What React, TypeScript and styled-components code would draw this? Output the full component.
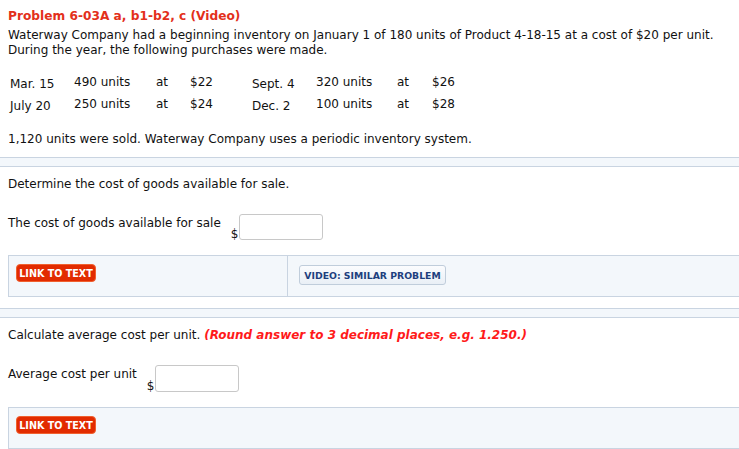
import React from "react";
import styled, { createGlobalStyle } from "styled-components";

const GlobalStyle = createGlobalStyle`
  body {
    margin: 0;
    background: #ffffff;
    font-family: "DejaVu Sans", Verdana, sans-serif;
    font-size: 12px;
    color: #111;
  }
`;

const purchases = [
  { date: "Mar. 15", units: "490 units", price: "$22", date2: "Sept. 4", units2: "320 units", price2: "$26" },
  { date: "July 20", units: "250 units", price: "$24", date2: "Dec. 2", units2: "100 units", price2: "$28" },
];

const App: React.FC = () => {
  return (
    <Page>
      <GlobalStyle />
      <Intro>
        <Title>Problem 6-03A a, b1-b2, c (Video)</Title>
        <Para>
          Waterway Company had a beginning inventory on January 1 of 180 units of Product 4-18-15 at a cost of $20 per unit.
          <br />
          During the year, the following purchases were made.
        </Para>
        <PurchaseGrid>
          {purchases.map((p) => (
            <React.Fragment key={p.date}>
              <DateCell>{p.date}</DateCell>
              <Cell>{p.units}</Cell>
              <Cell>at</Cell>
              <Cell>{p.price}</Cell>
              <DateCell>{p.date2}</DateCell>
              <Cell>{p.units2}</Cell>
              <Cell>at</Cell>
              <Cell>{p.price2}</Cell>
            </React.Fragment>
          ))}
        </PurchaseGrid>
        <SoldNote>1,120 units were sold. Waterway Company uses a periodic inventory system.</SoldNote>
      </Intro>

      <Divider />

      <Question>
        <Prompt>Determine the cost of goods available for sale.</Prompt>
        <AnswerRow>
          <AnswerLabel>The cost of goods available for sale</AnswerLabel>
          <Dollar>$</Dollar>
          <AnswerInput type="text" />
        </AnswerRow>
        <LinkBar>
          <LinkCell $width="279px" $divider>
            <TextLink>LINK TO TEXT</TextLink>
          </LinkCell>
          <LinkCell $pad="11px">
            <VideoButton>VIDEO: SIMILAR PROBLEM</VideoButton>
          </LinkCell>
        </LinkBar>
      </Question>

      <Divider $gap="11px" />

      <Question>
        <Prompt>
          Calculate average cost per unit. <Hint>(Round answer to 3 decimal places, e.g. 1.250.)</Hint>
        </Prompt>
        <AnswerRow>
          <AnswerLabel>Average cost per unit</AnswerLabel>
          <Dollar>$</Dollar>
          <AnswerInput type="text" $h="27px" />
        </AnswerRow>
        <LinkBar>
          <LinkCell>
            <TextLink>LINK TO TEXT</TextLink>
          </LinkCell>
        </LinkBar>
      </Question>
    </Page>
  );
};

export default App;

const Page = styled.div`
  width: 739px;
  overflow: hidden;
`;

const Intro = styled.section`
  padding: 8px 0 0 8px;
`;

const Title = styled.h1`
  margin: 0;
  font-size: 12.2px;
  line-height: 16px;
  font-weight: 700;
  color: #e3301b;
`;

const Para = styled.p`
  margin: 4px 0 0;
  line-height: 15px;
`;

const PurchaseGrid = styled.div`
  display: grid;
  grid-template-columns: 64px 82px 34px 62px 64px 81px 35px 60px;
  grid-auto-rows: 22px;
  margin: 14px 0 0 2px;
`;

const Cell = styled.div`
  line-height: 20px;
  white-space: nowrap;
`;

const DateCell = styled(Cell)`
  padding-top: 2px;
`;

const SoldNote = styled.p`
  margin: 16px 0 0;
  line-height: 15px;
`;

const Divider = styled.div<{ $gap?: string }>`
  margin-top: ${(p) => p.$gap || "10px"};
  height: 8px;
  background: #f3f7fb;
  border-top: 1px solid #c9d4e1;
  border-bottom: 1px solid #c9d4e1;
`;

const Question = styled.section`
  padding-left: 8px;
`;

const Prompt = styled.p`
  margin: 10px 0 0;
  line-height: 15px;
`;

const Hint = styled.span`
  color: #ff1a1a;
  font-weight: 700;
  font-style: italic;
`;

const AnswerRow = styled.div`
  display: flex;
  align-items: flex-start;
  margin-top: 22px;
`;

const AnswerLabel = styled.span`
  margin-top: 2px;
  line-height: 15px;
  margin-right: 10px;
`;

const Dollar = styled.span`
  align-self: flex-end;
  line-height: 12px;
  margin-right: 1px;
`;

const AnswerInput = styled.input<{ $h?: string }>`
  box-sizing: border-box;
  width: 84px;
  height: ${(p) => p.$h || "26px"};
  margin: 0;
  border: 1px solid #c8c8c8;
  border-radius: 3px;
  background: #fff;
`;

const LinkBar = styled.div`
  display: flex;
  margin-top: 15px;
  background: #f3f7fb;
  border: 1px solid #c9d4e1;
  border-right: none;
  height: 40px;
`;

const LinkCell = styled.div<{ $width?: string; $divider?: boolean; $pad?: string }>`
  box-sizing: border-box;
  width: ${(p) => p.$width || "auto"};
  flex: ${(p) => (p.$width ? "none" : "1")};
  padding: 8px 0 0 ${(p) => p.$pad || "7px"};
  border-right: ${(p) => (p.$divider ? "1px solid #c9d4e1" : "none")};
`;

const TextLink = styled.a`
  display: inline-flex;
  align-items: center;
  justify-content: center;
  box-sizing: border-box;
  width: 80px;
  height: 18px;
  border-radius: 4px;
  background: #e22b00;
  border: 1px solid #f0602f;
  color: #fff;
  font-size: 9.6px;
  font-weight: 700;
  white-space: nowrap;
  cursor: pointer;
`;

const VideoButton = styled.button`
  display: inline-flex;
  align-items: center;
  justify-content: center;
  box-sizing: border-box;
  margin-top: 1px;
  width: 147px;
  height: 20px;
  padding: 0;
  border: 1px solid #c0cddb;
  border-radius: 3px;
  background: linear-gradient(#fbfcfe, #e9eff6);
  color: #1e3f7e;
  font-family: "DejaVu Sans", Verdana, sans-serif;
  font-size: 9.3px;
  font-weight: 700;
  white-space: nowrap;
  cursor: pointer;
`;
